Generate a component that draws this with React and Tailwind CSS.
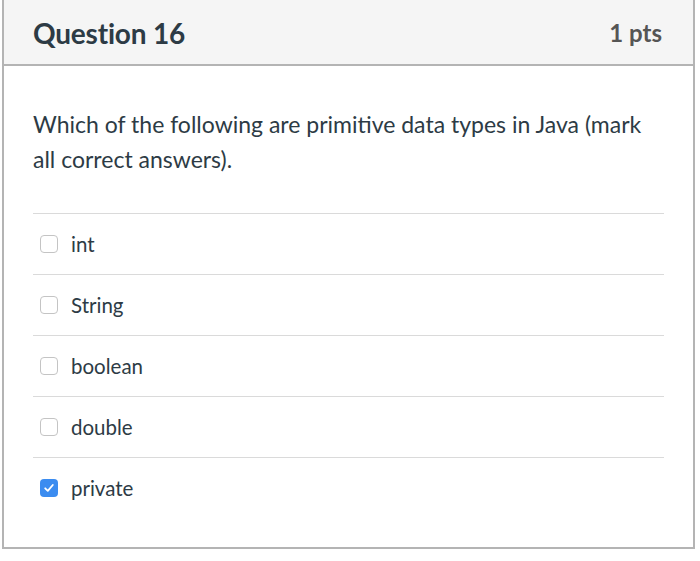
import React from "react";

const options = [
  { label: "int", checked: false },
  { label: "String", checked: false },
  { label: "boolean", checked: false },
  { label: "double", checked: false },
  { label: "private", checked: true },
];

function Box({ checked }) {
  if (checked) {
    return (
      <span className="flex h-[18px] w-[18px] items-center justify-center rounded-[4px] bg-[#3b8cf0]">
        <svg width="12" height="12" viewBox="0 0 12 12" fill="none">
          <path d="M2.2 6.3 L4.8 8.9 L9.8 3" stroke="white" strokeWidth="1.8" strokeLinecap="round" strokeLinejoin="round" />
        </svg>
      </span>
    );
  }
  return <span className="h-[18px] w-[18px] rounded-[4px] border border-[#c4c4c4] bg-white" />;
}

export default function App() {
  return (
    <div className="h-[561px] w-[700px] bg-white pl-[2px] pt-0" style={{ fontFamily: "Lato, 'Open Sans', sans-serif" }}>
      <div className="w-[693px] h-[549px] border-2 border-t-0 border-[#b4b4b4] flex flex-col">
        <div className="h-[66px] bg-[#f5f5f5] border-b-2 border-[#b4b4b4] flex items-center justify-between pl-[29px] pr-[31px] pt-[2px]">
          <span className="text-[28px] font-bold text-[#2d3b45] tracking-[-0.2px]">Question 16</span>
          <span className="text-[24px] font-bold text-[#555555]">1 pts</span>
        </div>
        <div className="pl-[29px] pr-[29px] pt-[41px]">
          <p className="text-[23px] leading-[35px] text-[#2d3b45] pb-[36px]">
            Which of the following are primitive data types in Java (mark all correct answers).
          </p>
          {options.map((o) => (
            <div key={o.label} className="border-t border-[#dadada] h-[61px] flex items-center gap-[13px] pl-[7px]">
              <Box checked={o.checked} />
              <span className="text-[20.5px] text-[#2d3b45]">{o.label}</span>
            </div>
          ))}
        </div>
      </div>
    </div>
  );
}
